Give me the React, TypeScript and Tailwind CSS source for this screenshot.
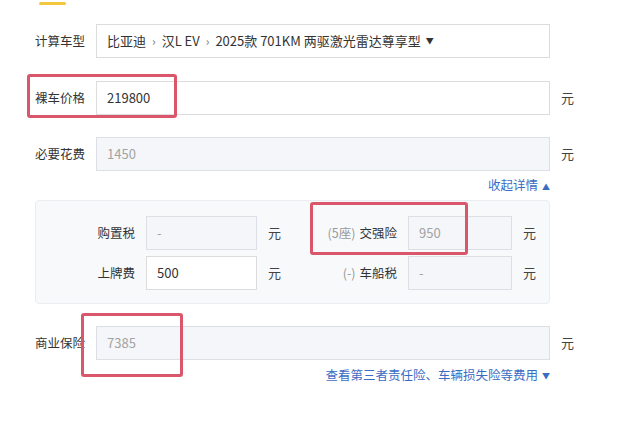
const font = { fontFamily: '"Noto Sans CJK SC", "Noto Sans", sans-serif' };

type FieldProps = {
  label: string;
  value: string;
  disabled?: boolean;
  unit?: boolean;
  top: string;
};

const Field = ({ label, value, disabled, unit = true, top }: FieldProps) => (
  <div className={`flex items-center ${top}`}>
    <span className="w-[61px] pl-[35px] box-content text-[12.5px] text-[#333] whitespace-nowrap">{label}</span>
    <div
      className={`w-[454px] h-[34px] flex items-center px-[10px] border text-[13px] ${
        disabled ? 'bg-[#f5f6f9] border-[#dcdfe5] text-[#a3a3a3]' : 'bg-white border-[#dcdcdc] text-[#333]'
      }`}
    >
      {value}
    </div>
    {unit && <span className="ml-[11px] text-[13px] text-[#444]">元</span>}
  </div>
);

const SmallField = ({
  label,
  hint,
  value,
  disabled,
  labelWidth,
  inputWidth,
}: {
  label: string;
  hint?: string;
  value: string;
  disabled?: boolean;
  labelWidth: string;
  inputWidth: string;
}) => (
  <div className="flex items-center">
    <span className={`${labelWidth} text-right pr-[11px] text-[12.5px] text-[#333] whitespace-nowrap`}>
      {hint && <span className="text-[#999] mr-[4px]">{hint}</span>}
      {label}
    </span>
    <div
      className={`${inputWidth} h-[34px] flex items-center px-[10px] border text-[13px] ${
        disabled ? 'bg-[#f5f6f9] border-[#dcdfe5] text-[#a3a3a3]' : 'bg-white border-[#dcdcdc] text-[#333]'
      }`}
    >
      {value}
    </div>
    <span className="ml-[11px] text-[13px] text-[#444]">元</span>
  </div>
);

const App = () => {
  return (
    <div className="relative w-[640px] h-[440px] bg-white overflow-hidden" style={font}>
      <div className="ml-[39px] mt-[2px] w-[27px] h-[3px] rounded-full bg-[#f3c640]" />

      <div className="flex items-center mt-[19px]">
        <span className="w-[61px] pl-[35px] box-content text-[12.5px] text-[#333] whitespace-nowrap">计算车型</span>
        <div className="w-[454px] h-[34px] flex items-center px-[10px] border border-[#dcdcdc] bg-white text-[13px] text-[#333] whitespace-nowrap">
          比亚迪
          <span className="mx-[6px] text-[#777] text-[12px]">›</span>
          汉L EV
          <span className="mx-[6px] text-[#777] text-[12px]">›</span>
          2025款 701KM 两驱激光雷达尊享型
          <span className="ml-[5px] text-[8px] text-[#333]">▼</span>
        </div>
      </div>

      <Field label="裸车价格" value="219800" top="mt-[23px]" />
      <Field label="必要花费" value="1450" disabled top="mt-[22px]" />

      <div className="w-[550px] h-[29px] flex items-center justify-end">
        <span className="text-[12.5px] text-[#3b6cc4]">
          收起详情<span className="ml-[4px] text-[8px] align-middle">▲</span>
        </span>
      </div>

      <div className="ml-[35px] w-[515px] h-[104px] rounded-[4px] border border-[#ebedf0] bg-[#f8f9fb] pt-[15px] flex flex-col gap-[6px]">
        <div className="flex items-center">
          <SmallField label="购置税" value="-" disabled labelWidth="w-[110px]" inputWidth="w-[111px]" />
          <SmallField label="交强险" hint="(5座)" value="950" disabled labelWidth="w-[127px]" inputWidth="w-[104px]" />
        </div>
        <div className="flex items-center">
          <SmallField label="上牌费" value="500" labelWidth="w-[110px]" inputWidth="w-[111px]" />
          <SmallField label="车船税" hint="(-)" value="-" disabled labelWidth="w-[127px]" inputWidth="w-[104px]" />
        </div>
      </div>

      <Field label="商业保险" value="7385" disabled top="mt-[22px]" />

      <div className="w-[550px] h-[32px] flex items-center justify-end -mt-[1px]">
        <span className="text-[12.5px] text-[#3b6cc4]">
          查看第三者责任险、车辆损失险等费用<span className="ml-[4px] text-[8px] align-middle">▼</span>
        </span>
      </div>

      {/* red highlight boxes drawn over the form */}
      <div className="absolute left-[27px] top-[74px] w-[150px] h-[44px] border-[3px] border-[#d9566b] rounded-[3px]" />
      <div className="absolute left-[310px] top-[202px] w-[158px] h-[53px] border-[3px] border-[#d9566b] rounded-[3px]" />
      <div className="absolute left-[81px] top-[313px] w-[102px] h-[64px] border-[3px] border-[#d9566b] rounded-[3px]" />
    </div>
  );
};

export default App;
